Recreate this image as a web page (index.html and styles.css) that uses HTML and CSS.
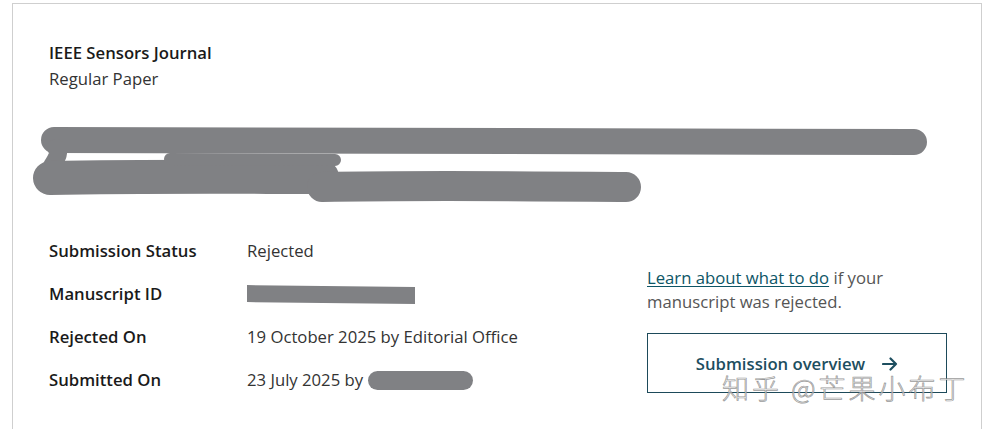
FILE: index.html
```html
<!DOCTYPE html>
<html lang="en">
<head>
<meta charset="utf-8">
<title>Submission</title>
<link rel="stylesheet" href="styles.css">
</head>
<body>
<div class="card">
  <div class="journal">IEEE Sensors Journal</div>
  <div class="type">Regular Paper</div>
  <svg class="redact" viewBox="13 120 970 90" width="970" height="90" aria-hidden="true">
    <g fill="none" stroke="#808184" stroke-linecap="round">
      <path d="M54 140 C300 139 600 143 914 142" stroke-width="26"/>
      <path d="M52 166 C58 156 60 152 56 148" stroke-width="18"/>
      <path d="M50 178 C150 176 250 177 322 177" stroke-width="34"/>
      <path d="M170 159 L335 160" stroke-width="12"/>
      <path d="M322 187 C420 185 520 186 626 187" stroke-width="30"/>
    </g>
  </svg>
  <div class="main">
    <dl class="details">
      <div class="row"><dt>Submission Status</dt><dd>Rejected</dd></div>
      <div class="row"><dt>Manuscript ID</dt><dd><span class="bar-id"></span></dd></div>
      <div class="row"><dt>Rejected On</dt><dd>19 October 2025 by Editorial Office</dd></div>
      <div class="row"><dt>Submitted On</dt><dd>23 July 2025 by <span class="bar-name"></span></dd></div>
    </dl>
    <div class="aside">
      <p class="help"><a href="#">Learn about what to do</a> if your manuscript was rejected.</p>
      <a class="btn" href="#">Submission overview
        <svg class="arrow" viewBox="0 0 16 14" width="16" height="14" aria-hidden="true"><path d="M1 7 H14 M8.5 1.5 L14 7 L8.5 12.5" fill="none" stroke="currentColor" stroke-width="2.2" stroke-linecap="round" stroke-linejoin="round"/></svg>
      </a>
    </div>
  </div>
</div>
<div class="watermark">知乎 @芒果小布丁</div>
</body>
</html>
```
FILE: styles.css
```css
html, body {
  margin: 0;
  padding: 0;
  background: #fff;
  font-family: "Open Sans", "Noto Sans", sans-serif;
  color: #222;
  overflow: hidden;
}
.card {
  margin: 3px 0 0 12px;
  width: 970px;
  height: 460px;
  border: 1px solid #cfcfcf;
  padding: 36px 36px 0 36px;
  box-sizing: border-box;
}
.journal {
  font-size: 16.7px;
  line-height: 26px;
  font-weight: 600;
  color: #1a1a1a;
}
.type {
  font-size: 16.7px;
  line-height: 26px;
  color: #333;
}
.redact {
  display: block;
  margin: 28px 0 0 -36px;
}
.main {
  display: grid;
  grid-template-columns: 598px 300px;
  margin-top: 19px;
}
.details {
  margin: 0;
}
.row {
  display: flex;
  height: 43px;
  align-items: center;
  font-size: 16.7px;
}
.row dt {
  width: 198px;
  font-weight: 600;
  color: #1a1a1a;
}
.row dd {
  margin: 0;
  color: #333;
  display: flex;
  align-items: center;
}
.bar-id {
  display: inline-block;
  width: 168px;
  height: 17px;
  background: #808184;
  transform: skewY(0.6deg);
  margin-top: 2px;
}
.bar-name {
  display: inline-block;
  width: 105px;
  height: 19px;
  border-radius: 10px;
  background: #808184;
  margin-left: 5px;
  margin-top: 2px;
}
.aside {
  padding-top: 37px;
}
.help {
  margin: 0;
  font-size: 16.7px;
  line-height: 24px;
  color: #555;
}
.help a {
  color: #0d5566;
  text-decoration: underline;
  text-underline-offset: 2px;
}
.btn {
  margin-top: 19px;
  display: flex;
  align-items: center;
  justify-content: center;
  height: 60px;
  box-sizing: border-box;
  border: 1px solid #1d4a5a;
  color: #1d4e5f;
  font-weight: 600;
  font-size: 16.7px;
  text-decoration: none;
}
.arrow {
  margin-left: 17px;
  margin-top: 1px;
}
.watermark {
  position: absolute;
  left: 722px;
  top: 368px;
  font-family: "Noto Sans CJK SC", sans-serif;
  font-weight: 300;
  font-size: 27px;
  letter-spacing: 3px;
  color: rgba(235, 235, 235, 0.85);
  -webkit-text-stroke: 0.7px rgba(110, 110, 110, 0.7);
  white-space: nowrap;
}
```
